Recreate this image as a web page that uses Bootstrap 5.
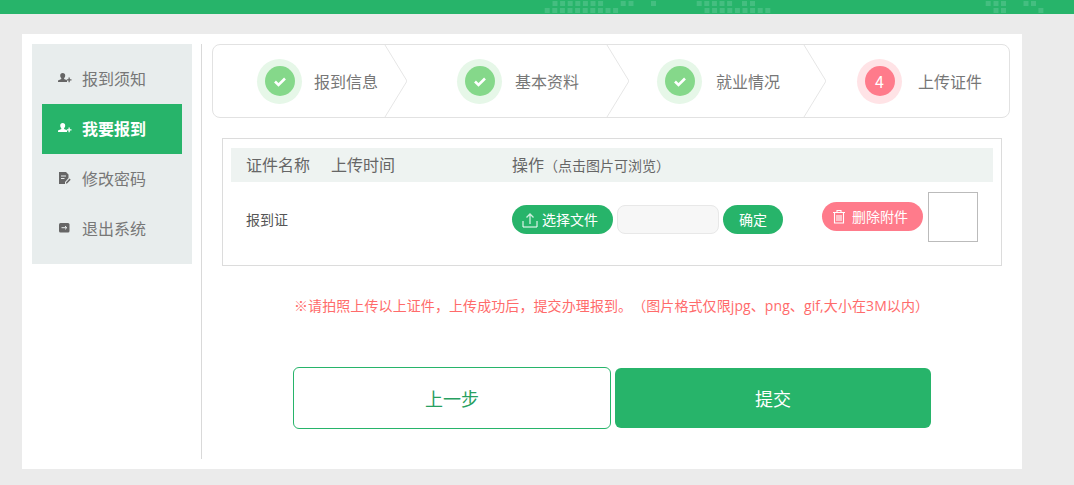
<!DOCTYPE html>
<html lang="zh-CN">
<head>
<meta charset="utf-8">
<title>上传证件</title>
<link href="https://cdn.jsdelivr.net/npm/bootstrap@5.3.0/dist/css/bootstrap.min.css" rel="stylesheet">
<style>
body{background:#ebebeb;font-family:"Noto Sans CJK SC","Liberation Sans",sans-serif;color:#777;height:485px;overflow:hidden;text-spacing-trim:space-all}
.top-strip{height:14px;background:#27b46a;overflow:hidden}
.top-strip svg{display:block}
.panel{width:1000px;height:435px;margin:20px 0 0 22px;background:#fff;padding:10px}
.side{width:160px;height:220px;background:#e8eded;padding:10px;flex:none}
.side-link{height:50px;color:#777;font-size:16px;padding:0 0 2px 16px;gap:10px;text-decoration:none}
.side-link svg{width:14px;height:14px;fill:#666;flex:none}
.side-link.is-on{background:#27b46a;color:#fff;font-weight:700}
.side-link.is-on svg{fill:#fff}
.rule{width:1px;height:415px;background:#d9d9d9;margin:0 10px 0 9px;flex:none}
.content{width:798px;flex:none}
.steps{height:74px;border:1px solid #e2e2e2;border-radius:8px}
.step{height:72px;font-size:16px;color:#777;flex:none;position:relative}
.step svg.arrow{position:absolute;right:0;top:0;width:23px;height:72px}
.s1{width:194px;padding-left:44px}.s2{width:222px;padding-left:50px}.s3{width:197px;padding-left:28px}.s4{width:183px;padding-left:31px}
.halo{width:45px;height:45px;border-radius:50%;background:#e6f7e8;flex:none}
.halo-red{background:#ffe3e6}
.dot{width:30px;height:30px;border-radius:50%;background:#85d88a;color:#fff;font-size:16px}
.halo-red .dot{background:#ff7b8b}
.s1 .lbl{margin-left:12px}.s2 .lbl{margin-left:13px}.s3 .lbl{margin-left:14px}.s4 .lbl{margin-left:16px}
.doc-box{width:780px;height:128px;margin:20px 0 0 10px;border:1px solid #dcdcdc;padding:9px 8px}
.doc-head{height:34px;background:#eef3f1;font-size:16px;color:#666;padding:0 0 2px 15px}
.doc-head small{font-size:14px;color:#666}
.c1{width:85px;flex:none}.c2{width:181px;flex:none}
.doc-row{height:68px;padding:10px 0 0 15px;font-size:14px;color:#555}
.doc-row .c1{margin-top:13px;line-height:29px}
.pill{height:29px;border-radius:15px;color:#fff;font-size:14px;border:0;padding:0;flex:none;margin-top:13px;line-height:29px}
.pill-pick{width:101px;background:#27b46a;gap:4px;padding-right:5px}
.pill-ok{width:60px;background:#27b46a;margin-left:4px}
.pill-del{width:101px;background:#ff7b8b;margin-left:39px;margin-top:10px;gap:6px;padding-right:5px}
.name-field{width:102px;height:29px;margin:13px 0 0 4px;background:#f7f7f7;border:1px solid #e8e8e8;border-radius:8px;flex:none}
.thumb{width:50px;height:50px;border:1px solid #bbb;margin-left:5px;flex:none}
.hint{margin:30px 0 0 82px;font-family:"Open Sans","Noto Sans CJK SC",sans-serif;font-size:14px;line-height:20px;color:#ff6b6b;white-space:nowrap;letter-spacing:.09px}
.acts{margin:51px 0 0 81px}
.act{height:60px;border-radius:6px;font-size:18px;flex:none;padding:0}
.act-prev{width:318px;height:62px;background:#fff;border:1px solid #27b46a;color:#27a05f}
.act-next{width:316px;margin-left:4px;background:#27b46a;border:0;color:#fff}
</style>
</head>
<body>
<div class="top-strip">
<svg width="1074" height="14" viewBox="0 0 1074 14" fill="#5cc692" fill-opacity=".55">
<g>
<rect x="552.5" y="1" width="5" height="5"/><rect x="560.1" y="1" width="5" height="5"/><rect x="567.7" y="1" width="5" height="5"/><rect x="575.3" y="1" width="5" height="5"/><rect x="582.9" y="1" width="5" height="5"/><rect x="590.5" y="1" width="5" height="5"/><rect x="598.1" y="1" width="5" height="5"/>
<rect x="620.7" y="1" width="5" height="5"/><rect x="628.5" y="1" width="5" height="5"/><rect x="651" y="1" width="5" height="5"/>
<rect x="696.7" y="1" width="5" height="5"/><rect x="704.3" y="1" width="5" height="5"/><rect x="711.9" y="1" width="5" height="5"/><rect x="719.5" y="1" width="5" height="5"/><rect x="727.1" y="1" width="5" height="5"/>
<rect x="742" y="1" width="5" height="5"/><rect x="750" y="1" width="5" height="5"/>
<rect x="985.7" y="1" width="5" height="5"/><rect x="993.5" y="1" width="5" height="5"/><rect x="1001" y="1" width="5" height="5"/>
<rect x="1023.5" y="1" width="5" height="5"/><rect x="1031" y="1" width="5" height="5"/>
</g>
<g>
<rect x="544.7" y="8" width="5" height="5"/><rect x="552.3" y="8" width="5" height="5"/><rect x="559.9" y="8" width="5" height="5"/><rect x="567.5" y="8" width="5" height="5"/><rect x="575.1" y="8" width="5" height="5"/><rect x="582.7" y="8" width="5" height="5"/><rect x="590.3" y="8" width="5" height="5"/><rect x="597.9" y="8" width="5" height="5"/><rect x="605.5" y="8" width="5" height="5"/><rect x="613.1" y="8" width="5" height="5"/>
<rect x="704.5" y="8" width="5" height="5"/><rect x="712.1" y="8" width="5" height="5"/><rect x="719.7" y="8" width="5" height="5"/><rect x="727.3" y="8" width="5" height="5"/><rect x="734.9" y="8" width="5" height="5"/><rect x="742.5" y="8" width="5" height="5"/><rect x="750.1" y="8" width="5" height="5"/><rect x="757.7" y="8" width="5" height="5"/><rect x="765.3" y="8" width="5" height="5"/>
<rect x="993.5" y="8" width="5" height="5"/><rect x="1001" y="8" width="5" height="5"/><rect x="1038.4" y="8" width="5" height="5"/>
</g>
</svg>
</div>
<div class="panel d-flex">
<nav class="side">
<a class="side-link d-flex align-items-center" href="#"><svg viewBox="0 0 14 14"><path d="M4.700 2C6.300 2 7.200 3 7.200 4.500 7.200 5.800 6.500 6.700 6.100 7.200V8.100L9 9.300V11H0V9.500L3.300 8.100V7.200C2.900 6.700 2.200 5.800 2.200 4.500 2.200 3 3.100 2 4.700 2Z"/><path d="M10.500 6.500h1.300v1.700H13.500v1.300H11.800v1.700h-1.300V9.500H8.800V8.200h1.700Z"/></svg>报到须知</a>
<a class="side-link is-on d-flex align-items-center" href="#"><svg viewBox="0 0 14 14"><path d="M4.700 2C6.300 2 7.200 3 7.200 4.500 7.200 5.800 6.500 6.700 6.100 7.200V8.100L9 9.300V11H0V9.500L3.300 8.100V7.200C2.900 6.700 2.200 5.800 2.200 4.500 2.200 3 3.100 2 4.700 2Z"/><path d="M10.500 6.500h1.300v1.700H13.500v1.300H11.800v1.700h-1.300V9.500H8.800V8.200h1.700Z"/></svg>我要报到</a>
<a class="side-link d-flex align-items-center" href="#"><svg viewBox="0 0 14 14"><path d="M1 1h7l2.500 2.500V7L7 11v2H1Z"/><path d="M3 5h5M3 7.500h3.500" stroke="#e8eded" stroke-width="1"/><path d="M11.500 7.500l1.200 1.200L9 12.500H8v-1Z"/></svg>修改密码</a>
<a class="side-link d-flex align-items-center" href="#"><svg viewBox="0 0 14 14"><rect x="1" y="2" width="10.500" height="9.500" rx="1.500"/><path d="M3.500 6.700H8.500M7 5 8.800 6.700 7 8.400" stroke="#e8eded" stroke-width="1" fill="none"/></svg>退出系统</a>
</nav>
<div class="rule"></div>
<main class="content">
<div class="steps d-flex">
<div class="step s1 d-flex align-items-center"><span class="halo d-flex align-items-center justify-content-center"><span class="dot d-flex align-items-center justify-content-center"><svg width="14" height="11" viewBox="0 0 14 11"><path d="M2 5.500 5.500 9 12 2.500" fill="none" stroke="#fff" stroke-width="2.600"/></svg></span></span><span class="lbl">报到信息</span><svg class="arrow" viewBox="0 0 23 72"><path d="M1 0 23 36 1 72" fill="none" stroke="#e6e6e6"/></svg></div>
<div class="step s2 d-flex align-items-center"><span class="halo d-flex align-items-center justify-content-center"><span class="dot d-flex align-items-center justify-content-center"><svg width="14" height="11" viewBox="0 0 14 11"><path d="M2 5.500 5.500 9 12 2.500" fill="none" stroke="#fff" stroke-width="2.600"/></svg></span></span><span class="lbl">基本资料</span><svg class="arrow" viewBox="0 0 23 72"><path d="M1 0 23 36 1 72" fill="none" stroke="#e6e6e6"/></svg></div>
<div class="step s3 d-flex align-items-center"><span class="halo d-flex align-items-center justify-content-center"><span class="dot d-flex align-items-center justify-content-center"><svg width="14" height="11" viewBox="0 0 14 11"><path d="M2 5.500 5.500 9 12 2.500" fill="none" stroke="#fff" stroke-width="2.600"/></svg></span></span><span class="lbl">就业情况</span><svg class="arrow" viewBox="0 0 23 72"><path d="M1 0 23 36 1 72" fill="none" stroke="#e6e6e6"/></svg></div>
<div class="step s4 d-flex align-items-center"><span class="halo halo-red d-flex align-items-center justify-content-center"><span class="dot d-flex align-items-center justify-content-center">4</span></span><span class="lbl">上传证件</span></div>
</div>
<div class="doc-box">
<div class="doc-head d-flex align-items-center"><span class="c1">证件名称</span><span class="c2">上传时间</span><span>操作<small>（点击图片可浏览）</small></span></div>
<div class="doc-row d-flex align-items-start">
<span class="c1">报到证</span><span class="c2"></span>
<button type="button" class="pill pill-pick d-flex align-items-center justify-content-center"><svg width="16" height="16" viewBox="0 0 16 16"><path d="M1 9v6h14V9" fill="none" stroke="#fff" stroke-width="1"/><path d="M8 12V2M4.500 5.500 8 2l3.500 3.500" fill="none" stroke="#cdeedd" stroke-width="1.300"/></svg>选择文件</button>
<span class="name-field"></span>
<button type="button" class="pill pill-ok">确定</button>
<button type="button" class="pill pill-del d-flex align-items-center justify-content-center"><svg width="14" height="15" viewBox="0 0 14 15"><path d="M1 3.500h12M5 3.500V1.500h4v2M2.500 3.500v10.500h9V3.500M5 6v6M7 6v6M9 6v6" fill="none" stroke="#fff" stroke-width="1.100"/></svg>删除附件</button>
<span class="thumb"></span>
</div>
</div>
<p class="hint mb-0">※请拍照上传以上证件，上传成功后，提交办理报到。（图片格式仅限jpg、png、gif,大小在3M以内）</p>
<div class="acts d-flex align-items-center">
<button type="button" class="act act-prev">上一步</button>
<button type="button" class="act act-next">提交</button>
</div>
</main>
</div>
<script src="https://cdn.jsdelivr.net/npm/bootstrap@5.3.0/dist/js/bootstrap.bundle.min.js"></script>
</body>
</html>
